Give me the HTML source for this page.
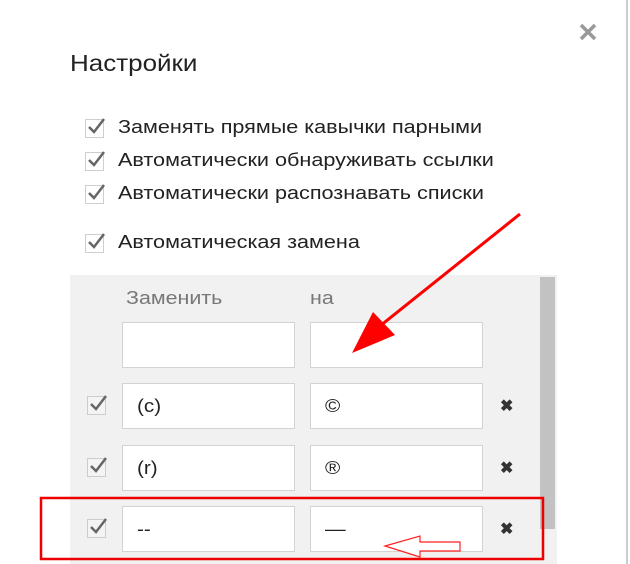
<!DOCTYPE html>
<html><head><meta charset="utf-8"><style>
body{margin:0;width:630px;height:564px;background:#fff;position:relative;overflow:hidden;font-family:"Liberation Sans",Arial,sans-serif;color:#222}
.a{position:absolute}
.cb{position:absolute;width:19px;height:19px;border:1px solid #cfcfcf;background:#fff;box-sizing:border-box}
.cb svg{position:absolute;left:1px;top:-3px}
.lbl{position:absolute;font-size:18px;color:#222;white-space:nowrap;transform:scaleX(1.2);transform-origin:0 0}
.in{position:absolute;width:173px;height:46px;background:#fff;border:1px solid #d3d3d3;box-sizing:border-box;font-size:18px;color:#222;line-height:44px;padding-left:14px}
.in span{display:inline-block;transform:scaleX(1.15);transform-origin:0 0}
.x{position:absolute;font-size:16px;font-weight:bold;color:#333}
</style></head><body>
<div class="a" style="left:626px;top:0;width:2px;height:564px;background:#ccc"></div>
<svg class="a" style="left:578px;top:22px" width="20" height="20"><path d="M3 3L17 17M17 3L3 17" stroke="#999" stroke-width="3.5"/></svg>
<div class="a" style="left:70px;top:50px;font-size:23px;color:#222;transform:scaleX(1.13);transform-origin:0 0">Настройки</div>

<div class="cb" style="left:85px;top:119px"><svg width="20" height="18"><path d="M2 10L7 15L17 2" stroke="#666" stroke-width="2.5" fill="none"/></svg></div>
<div class="lbl" style="left:118px;top:117px">Заменять прямые кавычки парными</div>
<div class="cb" style="left:85px;top:152px"><svg width="20" height="18"><path d="M2 10L7 15L17 2" stroke="#666" stroke-width="2.5" fill="none"/></svg></div>
<div class="lbl" style="left:118px;top:150px">Автоматически обнаруживать ссылки</div>
<div class="cb" style="left:85px;top:185px"><svg width="20" height="18"><path d="M2 10L7 15L17 2" stroke="#666" stroke-width="2.5" fill="none"/></svg></div>
<div class="lbl" style="left:118px;top:183px">Автоматически распознавать списки</div>
<div class="cb" style="left:85px;top:234px"><svg width="20" height="18"><path d="M2 10L7 15L17 2" stroke="#666" stroke-width="2.5" fill="none"/></svg></div>
<div class="lbl" style="left:118px;top:232px">Автоматическая замена</div>

<div class="a" style="left:70px;top:275px;width:487px;height:289px;background:#f1f1f1"></div>
<div class="a" style="left:540px;top:277px;width:15px;height:252px;background:#c2c2c2"></div>
<div class="a" style="left:126px;top:288px;font-size:18px;color:#777;transform:scaleX(1.19);transform-origin:0 0">Заменить</div>
<div class="a" style="left:310px;top:288px;font-size:18px;color:#777;transform:scaleX(1.19);transform-origin:0 0">на</div>

<div class="in" style="left:122px;top:322px"></div>
<div class="in" style="left:310px;top:322px"></div>

<div class="cb" style="left:87px;top:396px;border-color:#ccc;background:#f4f4f4"><svg width="20" height="18"><path d="M2 10L7 15L17 2" stroke="#666" stroke-width="2.5" fill="none"/></svg></div>
<div class="in" style="left:122px;top:383px"><span>(c)</span></div>
<div class="in" style="left:310px;top:383px"><span>©</span></div>
<div class="x" style="left:500px;top:396px">✖</div>

<div class="cb" style="left:87px;top:458px;border-color:#ccc;background:#f4f4f4"><svg width="20" height="18"><path d="M2 10L7 15L17 2" stroke="#666" stroke-width="2.5" fill="none"/></svg></div>
<div class="in" style="left:122px;top:445px"><span>(r)</span></div>
<div class="in" style="left:310px;top:445px"><span>®</span></div>
<div class="x" style="left:500px;top:458px">✖</div>

<div class="cb" style="left:87px;top:519px;border-color:#ccc;background:#f4f4f4"><svg width="20" height="18"><path d="M2 10L7 15L17 2" stroke="#666" stroke-width="2.5" fill="none"/></svg></div>
<div class="in" style="left:122px;top:506px"><span>--</span></div>
<div class="in" style="left:310px;top:506px"><span>—</span></div>
<div class="x" style="left:500px;top:519px">✖</div>

<svg class="a" style="left:0;top:0" width="630" height="564">
<rect x="41" y="498" width="502" height="61" fill="none" stroke="#e00" stroke-width="2.5"/>
<path d="M520 214L375 330" stroke="#f00" stroke-width="3" fill="none"/>
<path d="M352 353L373 312L395 335Z" fill="#f00"/>
<path d="M385 546L420 536L420 542L460 542L460 551L420 551L420 557Z" fill="#fff" stroke="#f22" stroke-width="1.2"/>
</svg>
</body></html>
